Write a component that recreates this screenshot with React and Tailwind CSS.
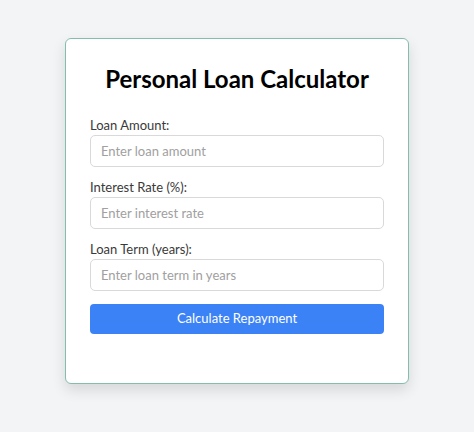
import React from 'react'

const Field = ({ label, placeholder }) => (
  <div className="flex flex-col">
    <label className="text-[13px] leading-[20px] text-[#3a3a3a]">{label}</label>
    <input
      type="text"
      placeholder={placeholder}
      className="h-[32px] w-full rounded-[5px] border border-[#d9d9d9] bg-white px-[10px] text-[13px] text-[#333] outline-none placeholder:text-[#a0a0a0]"
    />
  </div>
)

const App = () => {
  return (
    <div className="flex h-[432px] w-[474px] items-start justify-center bg-[#f3f4f6] pt-[38px] font-['Lato',sans-serif]">
      <div className="flex h-[346px] w-[344px] flex-col rounded-[6px] border border-[#86bcae] bg-white px-[24px] pt-[24px] shadow-[0_6px_14px_rgba(0,0,0,0.12)]">
        <h1 className="mb-[20px] text-center text-[24px] font-bold leading-[32px] text-black">Personal Loan Calculator</h1>
        <div className="flex flex-col gap-[10px]">
          <Field label="Loan Amount:" placeholder="Enter loan amount" />
          <Field label="Interest Rate (%):" placeholder="Enter interest rate" />
          <Field label="Loan Term (years):" placeholder="Enter loan term in years" />
        </div>
        <button className="mt-[13px] h-[30px] w-full rounded-[4px] bg-[#3b82f6] text-[13px] text-white">
          Calculate Repayment
        </button>
      </div>
    </div>
  )
}

export default App
